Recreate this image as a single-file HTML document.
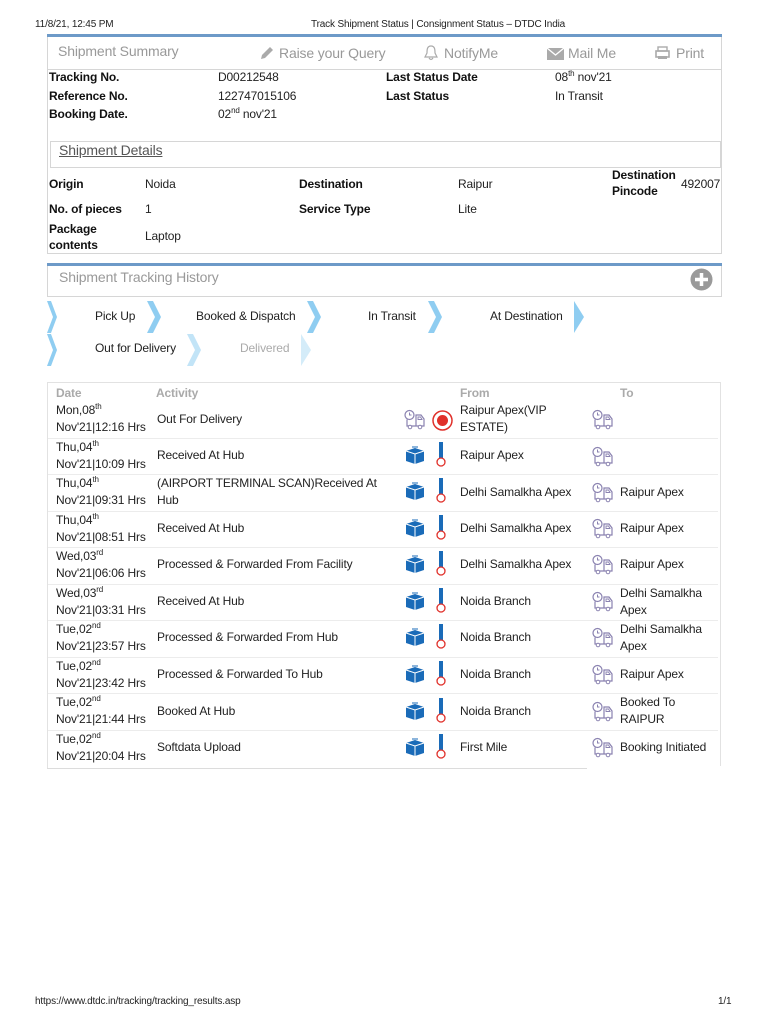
<!DOCTYPE html>
<html><head><meta charset="utf-8"><style>
*{margin:0;padding:0;box-sizing:border-box}
body{width:768px;height:1024px;background:#fff;position:relative;font-family:"Liberation Sans",Arial,sans-serif;font-size:12px;color:#222;overflow:hidden;letter-spacing:-0.15px}
.a{position:absolute;white-space:nowrap;line-height:17px}
.b{font-weight:bold;color:#111}
.g{color:#999}
sup{font-size:8px;line-height:0;vertical-align:5px}
.box{position:absolute;border:1px solid #d6d6d6}
.bar{position:absolute;height:3px;background:#6d9ac8}
.chev{position:absolute}
.sep{position:absolute;left:48px;width:670px;height:1px;background:#ececec}
</style></head><body>
<div class="a" style="left:35px;top:16px;font-size:10px">11/8/21, 12:45 PM</div>
<div class="a" style="left:311px;top:16px;font-size:10px">Track Shipment Status | Consignment Status – DTDC India</div>

<div class="bar" style="left:47px;top:34px;width:675px"></div>
<div class="box" style="left:47px;top:37px;width:675px;height:217px;border-top:none"></div>
<div style="position:absolute;left:47px;top:69px;width:675px;height:1px;background:#d6d6d6"></div>
<div class="a g" style="left:58px;top:43px;font-size:14px">Shipment Summary</div>
<svg style="position:absolute;left:259px;top:46px" width="15" height="15" viewBox="0 0 15 15"><path d="M2 13 L3 9 L11 1 L14 4 L6 12 Z" fill="#aaa"/></svg>
<div class="a g" style="left:279px;top:45px;font-size:14px">Raise your Query</div>
<svg style="position:absolute;left:424px;top:45px" width="14" height="16" viewBox="0 0 14 16"><path d="M7 1 C3 1 3 5 3 8 L1 12 H13 L11 8 C11 5 11 1 7 1 Z M5 13 Q7 16 9 13" fill="none" stroke="#aaa" stroke-width="1.2"/></svg>
<div class="a g" style="left:444px;top:45px;font-size:14px">NotifyMe</div>
<svg style="position:absolute;left:547px;top:47px" width="17" height="13" viewBox="0 0 17 13"><rect x="0" y="1" width="17" height="12" fill="#aaa"/><path d="M0 1 L8.5 8 L17 1" stroke="#fff" fill="none" stroke-width="1.3"/></svg>
<div class="a g" style="left:568px;top:45px;font-size:14px">Mail Me</div>
<svg style="position:absolute;left:655px;top:46px" width="15" height="14" viewBox="0 0 15 14"><rect x="3" y="1" width="9" height="4" fill="none" stroke="#aaa" stroke-width="1.4"/><rect x="1" y="5" width="13" height="6" fill="none" stroke="#aaa" stroke-width="1.6"/><rect x="3" y="10" width="9" height="3" fill="#aaa"/></svg>
<div class="a g" style="left:676px;top:45px;font-size:14px">Print</div>

<div class="a b" style="left:49px;top:69px">Tracking No.</div>
<div class="a" style="left:218px;top:69px">D00212548</div>
<div class="a b" style="left:386px;top:69px">Last Status Date</div>
<div class="a" style="left:555px;top:69px">08<sup>th</sup> nov'21</div>
<div class="a b" style="left:49px;top:88px">Reference No.</div>
<div class="a" style="left:218px;top:88px">122747015106</div>
<div class="a b" style="left:386px;top:88px">Last Status</div>
<div class="a" style="left:555px;top:88px">In Transit</div>
<div class="a b" style="left:49px;top:106px">Booking Date.</div>
<div class="a" style="left:218px;top:106px">02<sup>nd</sup> nov'21</div>

<div class="box" style="left:50px;top:141px;width:671px;height:27px"></div>
<div class="a" style="left:59px;top:142px;font-size:14px;color:#555;text-decoration:underline">Shipment Details</div>

<div class="a b" style="left:49px;top:176px">Origin</div>
<div class="a" style="left:145px;top:176px">Noida</div>
<div class="a b" style="left:299px;top:176px">Destination</div>
<div class="a" style="left:458px;top:176px">Raipur</div>
<div class="a b" style="left:612px;top:167px;line-height:16px">Destination<br>Pincode</div>
<div class="a" style="left:681px;top:176px">492007</div>
<div class="a b" style="left:49px;top:201px">No. of pieces</div>
<div class="a" style="left:145px;top:201px">1</div>
<div class="a b" style="left:299px;top:201px">Service Type</div>
<div class="a" style="left:458px;top:201px">Lite</div>
<div class="a b" style="left:49px;top:221px;line-height:16px">Package<br>contents</div>
<div class="a" style="left:145px;top:228px">Laptop</div>

<div class="bar" style="left:47px;top:263px;width:675px"></div>
<div class="box" style="left:47px;top:266px;width:675px;height:31px;border-top:none"></div>
<div class="a g" style="left:59px;top:269px;font-size:14px">Shipment Tracking History</div>
<svg style="position:absolute;left:690px;top:268px" width="23" height="23" viewBox="0 0 23 23"><circle cx="11.5" cy="11.5" r="11" fill="#9a9a9a"/><path d="M11.5 5 V18 M5 11.5 H18" stroke="#fff" stroke-width="3.5"/></svg>

<svg class="chev" style="left:47px;top:301px" width="12" height="32"><path d="M0 0 H4 L10 16 L4 32 H0 L6 16 Z" fill="#8fcdf1"/></svg>
<svg class="chev" style="left:147px;top:301px" width="16" height="32"><path d="M0 0 H6 L14 16 L6 32 H0 L8 16 Z" fill="#8fcdf1"/></svg>
<svg class="chev" style="left:307px;top:301px" width="16" height="32"><path d="M0 0 H6 L14 16 L6 32 H0 L8 16 Z" fill="#8fcdf1"/></svg>
<svg class="chev" style="left:428px;top:301px" width="16" height="32"><path d="M0 0 H6 L14 16 L6 32 H0 L8 16 Z" fill="#8fcdf1"/></svg>
<svg class="chev" style="left:574px;top:301px" width="12" height="32"><path d="M0 0 L10 16 L0 32 Z" fill="#8fcdf1"/></svg>
<svg class="chev" style="left:47px;top:334px" width="12" height="32"><path d="M0 0 H4 L10 16 L4 32 H0 L6 16 Z" fill="#8fcdf1"/></svg>
<svg class="chev" style="left:187px;top:334px" width="16" height="32"><path d="M0 0 H6 L14 16 L6 32 H0 L8 16 Z" fill="#c2e4f7"/></svg>
<svg class="chev" style="left:301px;top:334px" width="12" height="32"><path d="M0 0 L10 16 L0 32 Z" fill="#d4ecf9"/></svg>
<div class="a" style="left:95px;top:308px">Pick Up</div>
<div class="a" style="left:196px;top:308px">Booked &amp; Dispatch</div>
<div class="a" style="left:368px;top:308px">In Transit</div>
<div class="a" style="left:490px;top:308px">At Destination</div>
<div class="a" style="left:95px;top:340px">Out for Delivery</div>
<div class="a" style="left:240px;top:340px;color:#aaa">Delivered</div>

<div style="position:absolute;left:47px;top:382px;width:674px;height:387px;border:1px solid #e2e2e2;border-right:none;border-bottom:none"></div>
<div style="position:absolute;left:47px;top:768px;width:540px;height:1px;background:#dcdcdc"></div>
<div style="position:absolute;left:720px;top:382px;width:1px;height:384px;background:#e2e2e2"></div>
<div class="a b" style="left:56px;top:385px;color:#aaa">Date</div>
<div class="a b" style="left:156px;top:385px;color:#aaa">Activity</div>
<div class="a b" style="left:460px;top:385px;color:#aaa">From</div>
<div class="a b" style="left:620px;top:385px;color:#aaa">To</div>

<svg width="0" height="0" style="position:absolute">
<defs>
<g id="truck"><circle cx="5.5" cy="6" r="4.5" fill="none" stroke="#8a82b0" stroke-width="1.2"/><path d="M5.5 3.5 V6 H7.5" stroke="#8a82b0" fill="none" stroke-width="1"/><path d="M3 10.5 V17 H20 V10 L17 6 H12 V17" fill="none" stroke="#8a82b0" stroke-width="1.2"/><path d="M14 8 H16.5 L18 10.5 H14 Z" fill="none" stroke="#8a82b0" stroke-width="0.9"/><circle cx="6" cy="18" r="1.8" fill="#fff" stroke="#8a82b0"/><circle cx="16" cy="18" r="1.8" fill="#fff" stroke="#8a82b0"/></g>
<g id="box"><path d="M1 6 L10 3 L19 6 V16 L10 19 L1 16 Z" fill="#1a6bb8"/><path d="M1 6 L10 9 L19 6 M10 9 V19" stroke="#fff" stroke-width="1" fill="none"/><path d="M7 2 H13" stroke="#1a6bb8" stroke-width="1"/></g>
<g id="therm"><rect x="3" y="0" width="4" height="17" fill="#1a6bb8"/><circle cx="5" cy="20" r="4" fill="#fff" stroke="#e0302a" stroke-width="1.3"/></g>
</defs></svg>

<div class="a" style="left:56px;top:402px">Mon,08<sup>th</sup><br>Nov'21|12:16 Hrs</div>
<div class="a" style="left:157px;top:411px">Out For Delivery</div>
<svg style="position:absolute;left:404px;top:409px" width="22" height="22"><use href="#truck"/></svg>
<svg style="position:absolute;left:431px;top:409px" width="23" height="23"><circle cx="11.5" cy="11.5" r="9.5" fill="#fff" stroke="#e0302a" stroke-width="1.5"/><circle cx="11.5" cy="11.5" r="5.5" fill="#e0302a"/></svg>
<div class="a" style="left:460px;top:402px">Raipur Apex(VIP<br>ESTATE)</div>
<svg style="position:absolute;left:592px;top:409px" width="22" height="22"><use href="#truck"/></svg>

<div class="sep" style="top:438px"></div>
<div class="a" style="left:56px;top:439px">Thu,04<sup>th</sup><br>Nov'21|10:09 Hrs</div>
<div class="a" style="left:157px;top:447px">Received At Hub</div>
<svg style="position:absolute;left:405px;top:445px" width="22" height="22"><use href="#box"/></svg>
<svg style="position:absolute;left:436px;top:442px" width="12" height="26"><use href="#therm"/></svg>
<div class="a" style="left:460px;top:447px">Raipur Apex</div>
<svg style="position:absolute;left:592px;top:446px" width="22" height="22"><use href="#truck"/></svg>

<div class="sep" style="top:474px"></div>
<div class="a" style="left:56px;top:475px">Thu,04<sup>th</sup><br>Nov'21|09:31 Hrs</div>
<div class="a" style="left:157px;top:475px">(AIRPORT TERMINAL SCAN)Received At<br>Hub</div>
<svg style="position:absolute;left:405px;top:481px" width="22" height="22"><use href="#box"/></svg>
<svg style="position:absolute;left:436px;top:478px" width="12" height="26"><use href="#therm"/></svg>
<div class="a" style="left:460px;top:484px">Delhi Samalkha Apex</div>
<svg style="position:absolute;left:592px;top:482px" width="22" height="22"><use href="#truck"/></svg>
<div class="a" style="left:620px;top:484px">Raipur Apex</div>

<div class="sep" style="top:511px"></div>
<div class="a" style="left:56px;top:512px">Thu,04<sup>th</sup><br>Nov'21|08:51 Hrs</div>
<div class="a" style="left:157px;top:520px">Received At Hub</div>
<svg style="position:absolute;left:405px;top:518px" width="22" height="22"><use href="#box"/></svg>
<svg style="position:absolute;left:436px;top:515px" width="12" height="26"><use href="#therm"/></svg>
<div class="a" style="left:460px;top:520px">Delhi Samalkha Apex</div>
<svg style="position:absolute;left:592px;top:518px" width="22" height="22"><use href="#truck"/></svg>
<div class="a" style="left:620px;top:520px">Raipur Apex</div>

<div class="sep" style="top:547px"></div>
<div class="a" style="left:56px;top:548px">Wed,03<sup>rd</sup><br>Nov'21|06:06 Hrs</div>
<div class="a" style="left:157px;top:556px">Processed &amp; Forwarded From Facility</div>
<svg style="position:absolute;left:405px;top:554px" width="22" height="22"><use href="#box"/></svg>
<svg style="position:absolute;left:436px;top:551px" width="12" height="26"><use href="#therm"/></svg>
<div class="a" style="left:460px;top:556px">Delhi Samalkha Apex</div>
<svg style="position:absolute;left:592px;top:554px" width="22" height="22"><use href="#truck"/></svg>
<div class="a" style="left:620px;top:556px">Raipur Apex</div>

<div class="sep" style="top:584px"></div>
<div class="a" style="left:56px;top:585px">Wed,03<sup>rd</sup><br>Nov'21|03:31 Hrs</div>
<div class="a" style="left:157px;top:593px">Received At Hub</div>
<svg style="position:absolute;left:405px;top:591px" width="22" height="22"><use href="#box"/></svg>
<svg style="position:absolute;left:436px;top:588px" width="12" height="26"><use href="#therm"/></svg>
<div class="a" style="left:460px;top:593px">Noida Branch</div>
<svg style="position:absolute;left:592px;top:591px" width="22" height="22"><use href="#truck"/></svg>
<div class="a" style="left:620px;top:585px">Delhi Samalkha<br>Apex</div>

<div class="sep" style="top:620px"></div>
<div class="a" style="left:56px;top:621px">Tue,02<sup>nd</sup><br>Nov'21|23:57 Hrs</div>
<div class="a" style="left:157px;top:629px">Processed &amp; Forwarded From Hub</div>
<svg style="position:absolute;left:405px;top:627px" width="22" height="22"><use href="#box"/></svg>
<svg style="position:absolute;left:436px;top:624px" width="12" height="26"><use href="#therm"/></svg>
<div class="a" style="left:460px;top:629px">Noida Branch</div>
<svg style="position:absolute;left:592px;top:627px" width="22" height="22"><use href="#truck"/></svg>
<div class="a" style="left:620px;top:621px">Delhi Samalkha<br>Apex</div>

<div class="sep" style="top:657px"></div>
<div class="a" style="left:56px;top:658px">Tue,02<sup>nd</sup><br>Nov'21|23:42 Hrs</div>
<div class="a" style="left:157px;top:666px">Processed &amp; Forwarded To Hub</div>
<svg style="position:absolute;left:405px;top:664px" width="22" height="22"><use href="#box"/></svg>
<svg style="position:absolute;left:436px;top:661px" width="12" height="26"><use href="#therm"/></svg>
<div class="a" style="left:460px;top:666px">Noida Branch</div>
<svg style="position:absolute;left:592px;top:664px" width="22" height="22"><use href="#truck"/></svg>
<div class="a" style="left:620px;top:666px">Raipur Apex</div>

<div class="sep" style="top:693px"></div>
<div class="a" style="left:56px;top:694px">Tue,02<sup>nd</sup><br>Nov'21|21:44 Hrs</div>
<div class="a" style="left:157px;top:703px">Booked At Hub</div>
<svg style="position:absolute;left:405px;top:701px" width="22" height="22"><use href="#box"/></svg>
<svg style="position:absolute;left:436px;top:698px" width="12" height="26"><use href="#therm"/></svg>
<div class="a" style="left:460px;top:703px">Noida Branch</div>
<svg style="position:absolute;left:592px;top:701px" width="22" height="22"><use href="#truck"/></svg>
<div class="a" style="left:620px;top:694px">Booked To<br>RAIPUR</div>

<div class="sep" style="top:730px"></div>
<div class="a" style="left:56px;top:731px">Tue,02<sup>nd</sup><br>Nov'21|20:04 Hrs</div>
<div class="a" style="left:157px;top:739px">Softdata Upload</div>
<svg style="position:absolute;left:405px;top:737px" width="22" height="22"><use href="#box"/></svg>
<svg style="position:absolute;left:436px;top:734px" width="12" height="26"><use href="#therm"/></svg>
<div class="a" style="left:460px;top:739px">First Mile</div>
<svg style="position:absolute;left:592px;top:737px" width="22" height="22"><use href="#truck"/></svg>
<div class="a" style="left:620px;top:739px">Booking Initiated</div>

<div class="a" style="left:35px;top:993px;font-size:10px">https://www.dtdc.in/tracking/tracking_results.asp</div>
<div class="a" style="left:718px;top:993px;font-size:10px">1/1</div>
</body></html>
